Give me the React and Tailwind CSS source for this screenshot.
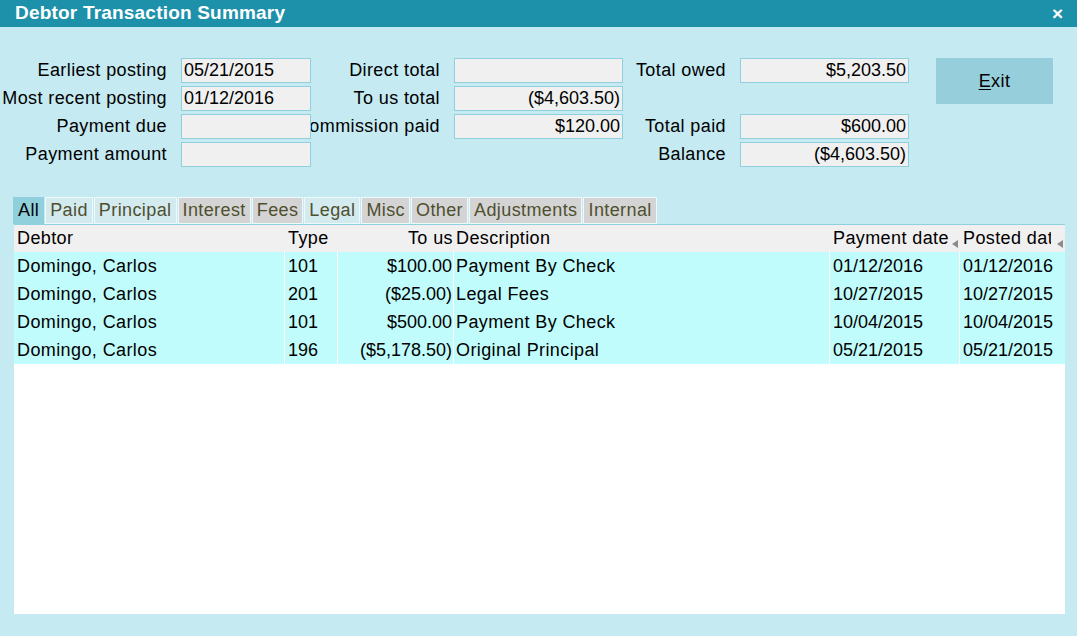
import React from 'react'

const font = { fontFamily: '"Liberation Sans", Arial, sans-serif' }

const Field = ({ value, w = 'w-[130px]', right = false }) => (
  <div
    className={`${w} h-[25px] shrink-0 border border-[#8fd0dc] bg-[#f0f0f0] flex items-center px-[2px] ${
      right ? 'justify-end' : 'justify-start'
    }`}
  >
    <span className="whitespace-nowrap">{value}</span>
  </div>
)

const Label = ({ text, w }) => (
  <div className={`${w} h-[25px] shrink-0 flex items-center justify-end overflow-hidden`}>
    <span className="whitespace-nowrap tracking-[0.4px]">{text}</span>
  </div>
)

const tabs = [
  { name: 'All', kind: 'active' },
  { name: 'Paid', kind: 'light' },
  { name: 'Principal', kind: 'light' },
  { name: 'Interest', kind: 'gray' },
  { name: 'Fees', kind: 'gray' },
  { name: 'Legal', kind: 'light' },
  { name: 'Misc', kind: 'gray' },
  { name: 'Other', kind: 'gray' },
  { name: 'Adjustments', kind: 'gray' },
  { name: 'Internal', kind: 'gray' },
]

const rows = [
  ['Domingo, Carlos', '101', '$100.00', 'Payment By Check', '01/12/2016', '01/12/2016'],
  ['Domingo, Carlos', '201', '($25.00)', 'Legal Fees', '10/27/2015', '10/27/2015'],
  ['Domingo, Carlos', '101', '$500.00', 'Payment By Check', '10/04/2015', '10/04/2015'],
  ['Domingo, Carlos', '196', '($5,178.50)', 'Original Principal', '05/21/2015', '05/21/2015'],
]

const SortMark = () => (
  <svg width="7" height="8" viewBox="0 0 7 8" className="absolute right-[2px] bottom-[4px]">
    <path d="M7 0 L7 8 L1 4 Z" fill="#8a8a8a" />
  </svg>
)

export default function App() {
  return (
    <div className="w-[1077px] h-[636px] bg-[#c5eaf2] text-[18px] text-black overflow-hidden flex flex-col" style={font}>
      {/* title bar */}
      <div className="h-[27px] bg-[#1e91aa] flex items-center justify-between pl-[15px] pr-[14px] text-white shrink-0">
        <span className="font-bold text-[19px] tracking-[0.2px]">Debtor Transaction Summary</span>
        <span className="font-bold text-[19px] leading-none">×</span>
      </div>

      {/* summary fields */}
      <div className="flex mt-[31px] h-[110px]">
        <div className="flex flex-col gap-[3px]">
          <div className="flex">
            <Label w="w-[167px]" text="Earliest posting" />
            <div className="w-[14px]" />
            <Field value="05/21/2015" />
          </div>
          <div className="flex">
            <Label w="w-[167px]" text="Most recent posting" />
            <div className="w-[14px]" />
            <Field value="01/12/2016" />
          </div>
          <div className="flex">
            <Label w="w-[167px]" text="Payment due" />
            <div className="w-[14px]" />
            <Field value="" />
          </div>
          <div className="flex">
            <Label w="w-[167px]" text="Payment amount" />
            <div className="w-[14px]" />
            <Field value="" />
          </div>
        </div>

        <div className="flex flex-col gap-[3px]">
          <div className="flex">
            <Label w="w-[129px]" text="Direct total" />
            <div className="w-[14px]" />
            <Field w="w-[169px]" value="" right />
          </div>
          <div className="flex">
            <Label w="w-[129px]" text="To us total" />
            <div className="w-[14px]" />
            <Field w="w-[169px]" value="($4,603.50)" right />
          </div>
          <div className="flex">
            <Label w="w-[129px]" text="Commission paid" />
            <div className="w-[14px]" />
            <Field w="w-[169px]" value="$120.00" right />
          </div>
        </div>

        <div className="flex flex-col gap-[3px]">
          <div className="flex">
            <Label w="w-[103px]" text="Total owed" />
            <div className="w-[14px]" />
            <Field w="w-[169px]" value="$5,203.50" right />
          </div>
          <div className="h-[25px]" />
          <div className="flex">
            <Label w="w-[103px]" text="Total paid" />
            <div className="w-[14px]" />
            <Field w="w-[169px]" value="$600.00" right />
          </div>
          <div className="flex">
            <Label w="w-[103px]" text="Balance" />
            <div className="w-[14px]" />
            <Field w="w-[169px]" value="($4,603.50)" right />
          </div>
        </div>

        <div className="ml-[27px]">
          <button className="w-[117px] h-[46px] bg-[#96cfdb] flex items-center justify-center text-[18px] tracking-[0.4px]">
            <span>
              <span className="underline underline-offset-2">E</span>xit
            </span>
          </button>
        </div>
      </div>

      {/* tabs */}
      <div className="flex mt-[29px] ml-[13px] h-[27px] items-end tracking-[0.4px]">
        {tabs.map((t) => (
          <div
            key={t.name}
            className={`h-[27px] flex items-center px-[4px] mr-[1px] border ${
              t.kind === 'active'
                ? 'bg-[#8fd0dc] border-[#8fd0dc] text-black'
                : t.kind === 'light'
                ? 'bg-[#d3eaef] border-[#eef9fb] text-[#4f4f2f]'
                : 'bg-[#d4d4d4] border-[#eef9fb] text-[#4f4f2f]'
            }`}
          >
            {t.name}
          </div>
        ))}
      </div>

      {/* table */}
      <div className="ml-[14px] mr-[12px] h-[390px] bg-white border-t border-[#8fd0dc] flex flex-col">
        <div className="flex h-[27px] bg-[#f0f0f0] items-center shrink-0 tracking-[0.4px]">
          <div className="w-[271px] pl-[3px]">Debtor</div>
          <div className="w-[53px] pl-[3px]">Type</div>
          <div className="w-[116px] text-right pr-[1px]">To us</div>
          <div className="w-[376px] pl-[2px]">Description</div>
          <div className="w-[130px] pl-[3px] relative h-full flex items-center">
            <span className="whitespace-nowrap">Payment date</span>
            <SortMark />
          </div>
          <div className="flex-1 pl-[3px] relative h-full flex items-center overflow-hidden whitespace-nowrap">
            <span className="w-[88px] overflow-hidden">Posted date</span>
            <SortMark />
          </div>
        </div>
        {rows.map((r, i) => (
          <div key={i} className="flex h-[28px] bg-[#c0fcfc] items-center">
            <div className="w-[271px] pl-[3px] h-full flex items-center border-r border-white tracking-[0.4px]">{r[0]}</div>
            <div className="w-[53px] pl-[3px] h-full flex items-center border-r border-white">{r[1]}</div>
            <div className="w-[116px] pr-[1px] h-full flex items-center justify-end border-r border-white">{r[2]}</div>
            <div className="w-[376px] pl-[2px] h-full flex items-center border-r border-white tracking-[0.4px]">{r[3]}</div>
            <div className="w-[130px] pl-[3px] h-full flex items-center border-r border-white">{r[4]}</div>
            <div className="flex-1 pl-[3px] h-full flex items-center">{r[5]}</div>
          </div>
        ))}
      </div>
    </div>
  )
}
